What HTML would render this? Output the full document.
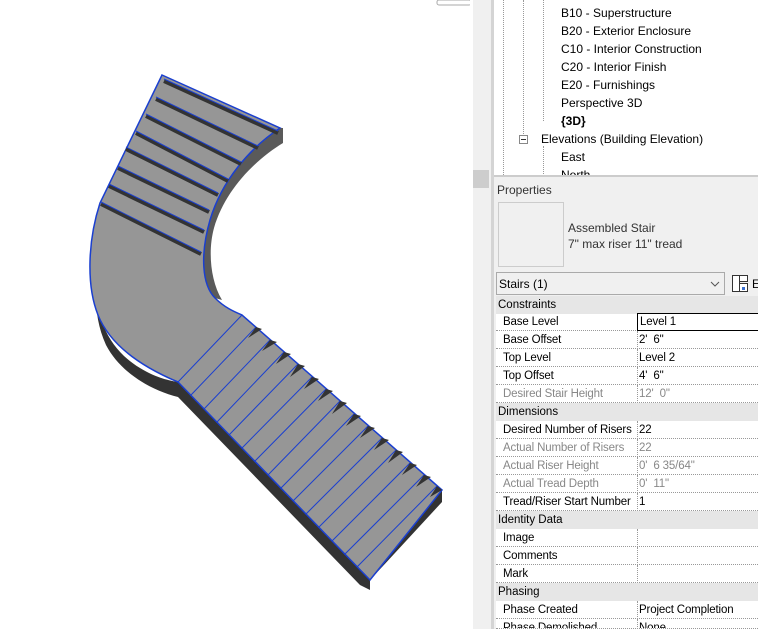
<!DOCTYPE html>
<html><head><meta charset="utf-8"><style>
*{margin:0;padding:0;box-sizing:border-box}
body{width:758px;height:629px;overflow:hidden;background:#fff;font-family:"Liberation Sans",sans-serif;font-size:12px;color:#000;position:relative}
.abs{position:absolute}
.t{position:absolute;white-space:nowrap;line-height:18px}
.row{position:absolute;left:496px;width:262px;height:18px;border-bottom:1px dotted #999;line-height:17px;font-size:11.5px;letter-spacing:-0.15px}
.row .k{position:absolute;left:7px;top:1px}
.row .v{position:absolute;left:143px;top:1px}
.row .sep{position:absolute;left:141px;top:0;height:18px;border-left:1px dotted #999}
.g{color:#888}
.hdr{position:absolute;left:496px;width:262px;height:18px;background:#e6e6e6;line-height:19px;padding-left:2px;font-size:11.5px}
</style></head><body>
<svg class="abs" style="left:0;top:0" width="470" height="629">
<path d="M178,382 L178,397 L360,585 L370,590 L370,580 Z" fill="#333"/>
<path d="M96,285 C96,320 110,350 140,368 C155,377 166,380 178,382 L178,397 C150,390 120,372 106,345 C97,325 95,305 96,285Z" fill="#333"/>
<path d="M280,128 C250,150 215,185 204,225 C198,255 202,285 215,298 L222,300 C210,280 208,250 214,228 C225,190 255,160 283,143 L283,128Z" fill="#5a5a5a"/>
<path d="M370,580 L442,502 L442,490 L370,580Z" fill="#333"/>
<path d="M162,75 L280,128 C250,148 222,180 210,220 C200,255 202,285 215,298 C225,308 235,312 242,315 L442,490 L370,580 L178,382 C140,366 110,345 98,315 C86,285 88,240 100,203 Z" fill="#969696" stroke="#1a3fd0" stroke-width="1.5"/>
<g stroke="#333" stroke-width="4">
<line x1="164" y1="81" x2="278" y2="133"/>
<line x1="156" y1="99" x2="258" y2="148"/>
<line x1="146" y1="116" x2="241" y2="164"/>
<line x1="136" y1="133" x2="228" y2="181"/>
<line x1="126" y1="149" x2="218" y2="195"/>
<line x1="118" y1="168" x2="209" y2="212"/>
<line x1="109" y1="186" x2="204" y2="232"/>
<line x1="101" y1="204" x2="201" y2="254"/>
</g>
<g stroke="#1a3fd0" stroke-width="1">
<line x1="164" y1="79" x2="278" y2="131"/>
<line x1="156" y1="97" x2="258" y2="146"/>
<line x1="146" y1="114" x2="241" y2="162"/>
<line x1="136" y1="131" x2="228" y2="179"/>
<line x1="126" y1="147" x2="218" y2="193"/>
<line x1="118" y1="166" x2="209" y2="210"/>
<line x1="109" y1="184" x2="204" y2="230"/>
<line x1="101" y1="202" x2="201" y2="252"/>
</g>
<g stroke="#1a3fd0" stroke-width="1">
<line x1="178" y1="382" x2="242" y2="315"/>
<line x1="191" y1="395" x2="256" y2="327"/>
<line x1="204" y1="409" x2="270" y2="340"/>
<line x1="217" y1="422" x2="284" y2="352"/>
<line x1="229" y1="435" x2="298" y2="364"/>
<line x1="242" y1="448" x2="312" y2="377"/>
<line x1="255" y1="461" x2="326" y2="389"/>
<line x1="268" y1="475" x2="340" y2="401"/>
<line x1="281" y1="488" x2="354" y2="414"/>
<line x1="293" y1="501" x2="368" y2="426"/>
<line x1="306" y1="514" x2="382" y2="438"/>
<line x1="319" y1="527" x2="396" y2="450"/>
<line x1="332" y1="541" x2="410" y2="463"/>
<line x1="345" y1="554" x2="424" y2="475"/>
<line x1="357" y1="567" x2="437" y2="486"/>
</g>
<g fill="#333">
<path d="M256,327 L262,329 L248,338Z"/><path d="M270,340 L277,342 L262,351Z"/><path d="M284,352 L291,354 L276,364Z"/>
<path d="M298,364 L305,366 L290,377Z"/><path d="M312,377 L319,379 L304,389Z"/><path d="M326,389 L333,391 L318,401Z"/>
<path d="M340,401 L347,403 L332,414Z"/><path d="M354,414 L361,416 L346,426Z"/><path d="M368,426 L375,428 L360,438Z"/>
<path d="M382,438 L389,440 L374,450Z"/><path d="M396,450 L403,452 L388,463Z"/><path d="M410,463 L417,465 L402,475Z"/>
<path d="M424,475 L431,477 L416,487Z"/><path d="M437,486 L442,490 L430,497Z"/>
</g>
<rect x="437" y="0" width="34" height="5" rx="2" fill="#fff" stroke="#aaa"/>
</svg>
<div class="abs" style="left:473px;top:0;width:18px;height:629px;background:#f0f0f0"></div>
<div class="abs" style="left:473px;top:170px;width:16px;height:18px;background:#cdcdcd"></div>
<div class="abs" style="left:491px;top:0;width:3px;height:629px;background:#d4d4d4"></div>
<div class="abs" style="left:494px;top:0;width:264px;height:175px;background:#fff;overflow:hidden">
<div class="abs" style="left:9px;top:0;height:175px;border-left:1px dotted #999"></div>
<div class="abs" style="left:29px;top:0;height:140px;border-left:1px dotted #999"></div>
<div class="abs" style="left:49px;top:0;height:121px;border-left:1px dotted #999"></div>
<div class="abs" style="left:49px;top:146px;height:30px;border-left:1px dotted #999"></div>
</div>
<div class="t" style="left:561px;top:4px">B10 - Superstructure</div>
<div class="t" style="left:561px;top:22px">B20 - Exterior Enclosure</div>
<div class="t" style="left:561px;top:40px">C10 - Interior Construction</div>
<div class="t" style="left:561px;top:58px">C20 - Interior Finish</div>
<div class="t" style="left:561px;top:76px">E20 - Furnishings</div>
<div class="t" style="left:561px;top:94px">Perspective 3D</div>
<div class="t" style="left:561px;top:112px;font-weight:bold">{3D}</div>
<div class="abs" style="left:519px;top:135px;width:9px;height:9px;border:1px solid #888;background:#fff"><div class="abs" style="left:1px;top:3px;width:5px;height:1px;background:#333"></div></div>
<div class="t" style="left:541px;top:130px">Elevations (Building Elevation)</div>
<div class="t" style="left:561px;top:148px">East</div>
<div class="t" style="left:561px;top:166px;height:9px;overflow:hidden">North</div>
<div class="abs" style="left:494px;top:175px;width:264px;height:454px;background:#f0f0f0;border-top:2px solid #ccc"></div>
<div class="t" style="left:497px;top:181px;color:#333">Properties</div>
<div class="abs" style="left:498px;top:202px;width:66px;height:65px;border:1px solid #ccc;background:#f0f0f0"></div>
<div class="t" style="left:568px;top:219px;color:#333">Assembled Stair</div>
<div class="t" style="left:568px;top:235px;color:#333">7" max riser 11" tread</div>
<div class="abs" style="left:496px;top:272px;width:229px;height:23px;border:1px solid #aaa;background:#f0f0f0"></div>
<div class="t" style="left:499px;top:275px">Stairs (1)</div>
<svg class="abs" style="left:710px;top:280px" width="10" height="8"><path d="M1,2 L5,6 L9,2" fill="none" stroke="#555"/></svg>
<svg class="abs" style="left:731px;top:274px" width="20" height="20"><rect x="1.5" y="1.5" width="7" height="16" fill="#fff" stroke="#333"/><rect x="8.5" y="1.5" width="8" height="6" fill="#fff" stroke="#333"/><rect x="8.5" y="9.5" width="8" height="8" fill="#fff" stroke="#333"/><rect x="11" y="13" width="3" height="3" fill="#3a6fd0"/></svg>
<div class="t" style="left:752px;top:275px">E</div>
<div class="abs" style="left:496px;top:296px;width:262px;height:333px;background:#fff"></div>
<div class="hdr" style="top:296px">Constraints</div>
<div class="row" style="top:313px"><span class="k">Base Level</span><span class="sep"></span><span style="left:141px;top:0;height:18px;width:125px;border:1px solid #000;padding-left:2px;position:absolute;line-height:16px">Level 1</span></div>
<div class="row" style="top:331px"><span class="k">Base Offset</span><span class="sep"></span><span class="v">2'&nbsp; 6"</span></div>
<div class="row" style="top:349px"><span class="k">Top Level</span><span class="sep"></span><span class="v">Level 2</span></div>
<div class="row" style="top:367px"><span class="k">Top Offset</span><span class="sep"></span><span class="v">4'&nbsp; 6"</span></div>
<div class="row g" style="top:385px"><span class="k">Desired Stair Height</span><span class="sep"></span><span class="v">12'&nbsp; 0"</span></div>
<div class="hdr" style="top:403px">Dimensions</div>
<div class="row" style="top:421px"><span class="k">Desired Number of Risers</span><span class="sep"></span><span class="v">22</span></div>
<div class="row g" style="top:439px"><span class="k">Actual Number of Risers</span><span class="sep"></span><span class="v">22</span></div>
<div class="row g" style="top:457px"><span class="k">Actual Riser Height</span><span class="sep"></span><span class="v">0'&nbsp; 6 35/64"</span></div>
<div class="row g" style="top:475px"><span class="k">Actual Tread Depth</span><span class="sep"></span><span class="v">0'&nbsp; 11"</span></div>
<div class="row" style="top:493px"><span class="k">Tread/Riser Start Number</span><span class="sep"></span><span class="v">1</span></div>
<div class="hdr" style="top:511px">Identity Data</div>
<div class="row" style="top:529px"><span class="k">Image</span><span class="sep"></span></div>
<div class="row" style="top:547px"><span class="k">Comments</span><span class="sep"></span></div>
<div class="row" style="top:565px"><span class="k">Mark</span><span class="sep"></span></div>
<div class="hdr" style="top:583px">Phasing</div>
<div class="row" style="top:601px"><span class="k">Phase Created</span><span class="sep"></span><span class="v">Project Completion</span></div>
<div class="row" style="top:619px;overflow:hidden;height:10px"><span class="k">Phase Demolished</span><span class="sep"></span><span class="v">None</span></div>
</body></html>
